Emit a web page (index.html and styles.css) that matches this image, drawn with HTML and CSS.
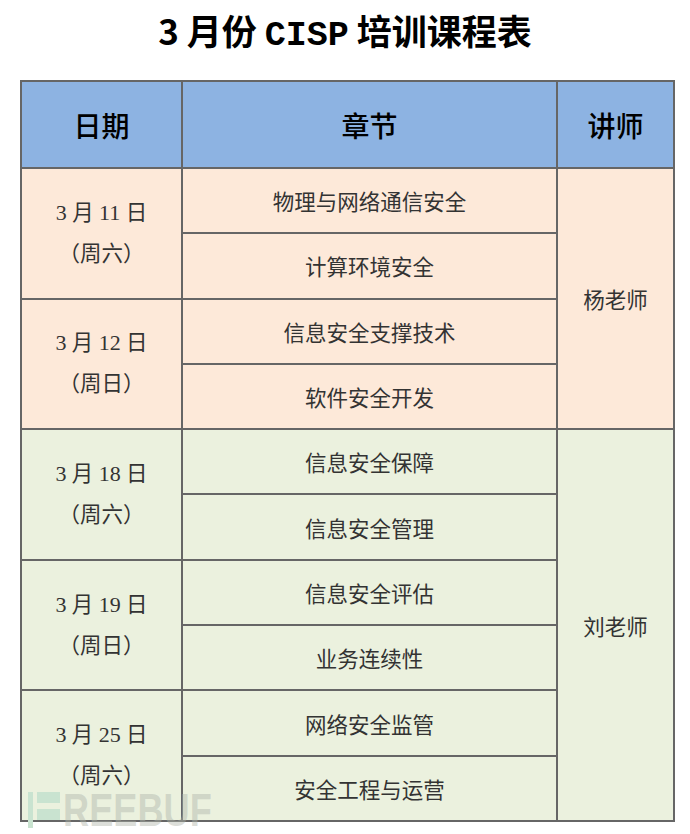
FILE: index.html
```html
<!DOCTYPE html>
<html lang="zh-CN">
<head>
<meta charset="utf-8">
<title>3 月份 CISP 培训课程表</title>
<link rel="stylesheet" href="styles.css">
</head>
<body>
<div class="page">
  <h1 class="title">3 月份 <span class="latin">CISP</span> 培训课程表</h1>
  <table class="schedule">
    <colgroup>
      <col class="col-date">
      <col class="col-chapter">
      <col class="col-teacher">
    </colgroup>
    <thead>
      <tr class="head-row">
        <th>日期</th>
        <th>章节</th>
        <th>讲师</th>
      </tr>
    </thead>
    <tbody class="peach">
      <tr>
        <td rowspan="2" class="date"><span class="d1"><span class="num">3</span> 月 <span class="num">11</span> 日</span><span class="d2">（周六）</span></td>
        <td>物理与网络通信安全</td>
        <td rowspan="4">杨老师</td>
      </tr>
      <tr><td>计算环境安全</td></tr>
      <tr>
        <td rowspan="2" class="date"><span class="d1"><span class="num">3</span> 月 <span class="num">12</span> 日</span><span class="d2">（周日）</span></td>
        <td>信息安全支撑技术</td>
      </tr>
      <tr><td>软件安全开发</td></tr>
    </tbody>
    <tbody class="green">
      <tr>
        <td rowspan="2" class="date"><span class="d1"><span class="num">3</span> 月 <span class="num">18</span> 日</span><span class="d2">（周六）</span></td>
        <td>信息安全保障</td>
        <td rowspan="6">刘老师</td>
      </tr>
      <tr><td>信息安全管理</td></tr>
      <tr>
        <td rowspan="2" class="date"><span class="d1"><span class="num">3</span> 月 <span class="num">19</span> 日</span><span class="d2">（周日）</span></td>
        <td>信息安全评估</td>
      </tr>
      <tr><td>业务连续性</td></tr>
      <tr>
        <td rowspan="2" class="date"><span class="d1"><span class="num">3</span> 月 <span class="num">25</span> 日</span><span class="d2">（周六）</span></td>
        <td>网络安全监管</td>
      </tr>
      <tr><td>安全工程与运营</td></tr>
    </tbody>
  </table>
</div>
<div class="watermark">
  <svg class="wm-mark" width="33" height="36" viewBox="0 0 33 36">
    <rect x="0" y="0" width="5" height="36" fill="#c9e3d0"/>
    <rect x="9" y="0" width="23" height="11" fill="#c9e3d0"/>
    <rect x="9" y="17" width="23" height="11" fill="#c9e3d0"/>
  </svg>
  <span class="wm-text">REEBUF</span>
</div>
</body>
</html>
```

FILE: styles.css
```css
html, body {
  margin: 0;
  padding: 0;
  background: #ffffff;
}

.page {
  padding: 13px 16px 0 20px;
}

.title {
  margin: 0 0 33px 0;
  height: 34px;
  font-family: "Noto Sans CJK SC", sans-serif;
  font-weight: 700;
  font-size: 35px;
  line-height: 34px;
  text-align: center;
  color: #000;
  padding-right: 4px;
}

.latin {
  font-family: "Liberation Mono", monospace;
  font-weight: 700;
  line-height: 1;
}

.schedule {
  border-collapse: collapse;
  table-layout: fixed;
  width: 653px;
  font-family: "Liberation Serif", "Noto Sans CJK SC", serif;
  font-size: 21.5px;
  color: #333;
}

.col-date { width: 161px; }
.col-chapter { width: 375px; }
.col-teacher { width: 117px; }

.schedule th,
.schedule td {
  border: 2px solid #666;
  text-align: center;
  vertical-align: middle;
  padding: 0;
}

.head-row {
  height: 87px;
}

.schedule th {
  background: #8db3e2;
  font-family: "Noto Sans CJK SC", sans-serif;
  font-weight: 500;
  font-size: 28px;
  color: #000;
}

.schedule tbody tr {
  height: 65.3px;
}

.peach td { background: #fde9d9; }
.green td { background: #ebf1de; }

.d1,
.d2 {
  display: block;
  line-height: 24px;
}

.d2 {
  margin-top: 17px;
}

.num {
  font-family: "Liberation Serif", serif;
  font-size: 22px;
}

.watermark {
  position: absolute;
  left: 28px;
  top: 792px;
  display: flex;
  align-items: flex-start;
  gap: 2px;
  pointer-events: none;
}

.wm-text {
  font-family: "Liberation Sans", sans-serif;
  font-weight: 700;
  font-size: 47px;
  line-height: 40px;
  color: rgba(175, 180, 170, 0.45);
  transform: scaleX(0.77);
  transform-origin: left top;
  margin-top: -2px;
}
```
